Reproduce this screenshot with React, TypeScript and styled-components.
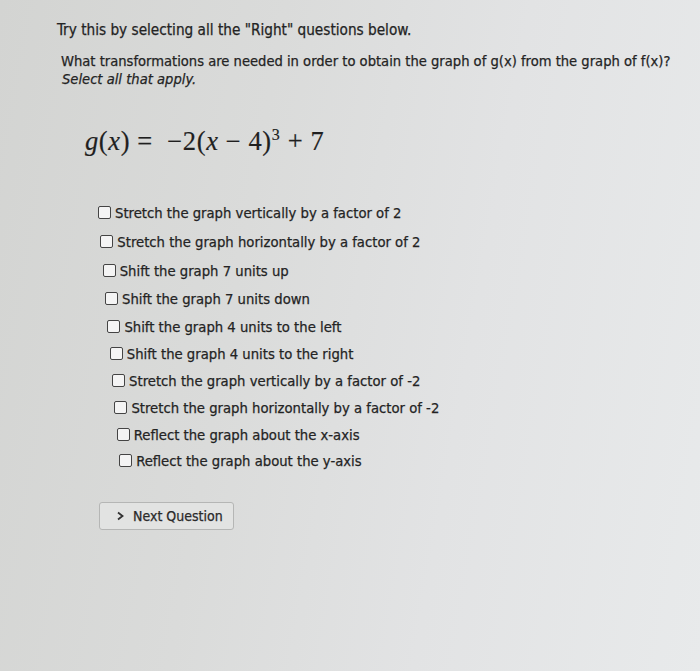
import React from "react";
import styled, { createGlobalStyle } from "styled-components";

const Global = createGlobalStyle`
  html, body { margin: 0; padding: 0; }
  body {
    width: 700px;
    height: 671px;
    overflow: hidden;
    background: linear-gradient(100deg, #d3d4d2 0%, #dadbda 35%, #e2e3e4 65%, #e8eaeb 100%);
    font-family: "DejaVu Sans Condensed", "DejaVu Sans", sans-serif;
    color: #222;
    -webkit-text-stroke: 0.25px #2a2a2a;
  }
`;

const Page = styled.div`
  display: flex;
  flex-direction: column;
  padding: 20px 0 0 57px;
`;

const Title = styled.div`
  font-size: 15.2px;
  line-height: 20px;
`;

const Question = styled.div`
  margin-top: 12px;
  margin-left: 4px;
  font-size: 14.6px;
  line-height: 18px;
`;

const Italic = styled.div`
  font-style: italic;
  margin-left: 1px;
`;

const Formula = styled.div`
  margin: 37px 0 0 28px;
  font-family: "Liberation Serif", "DejaVu Serif", serif;
  font-size: 26.5px;
  line-height: 32px;
  color: #1f1f1f;
  letter-spacing: 0.6px;
  -webkit-text-stroke: 0.2px #1f1f1f;
`;

const Var = styled.span`
  font-style: italic;
`;

const Sup = styled.sup`
  font-size: 16px;
  vertical-align: 10px;
  line-height: 0;
`;

const List = styled.div`
  display: flex;
  flex-direction: column;
  margin-top: 41px;
  margin-left: 41px;
`;

const Row = styled.label<{ $indent: number; $h: number }>`
  display: flex;
  align-items: center;
  gap: 4px;
  height: ${(p) => p.$h}px;
  margin-left: ${(p) => p.$indent}px;
  font-size: 14.7px;
  cursor: pointer;
`;

const Box = styled.span`
  width: 13px;
  height: 13px;
  box-sizing: border-box;
  border: 1.5px solid #444;
  border-radius: 2px;
  background: #f4f4f4;
  flex: none;
`;

const Button = styled.button`
  margin: 28px 0 0 42px;
  align-self: flex-start;
  display: flex;
  align-items: center;
  gap: 8px;
  width: 135px;
  height: 28px;
  padding: 0 0 0 16px;
  box-sizing: border-box;
  border: 1px solid #b5b6b5;
  border-radius: 3px;
  background: #e2e3e2;
  font-family: "DejaVu Sans Condensed", "DejaVu Sans", sans-serif;
  font-size: 14px;
  color: #2a2a2a;
  -webkit-text-stroke: 0.25px #2a2a2a;
`;

const options = [
  "Stretch the graph vertically by a factor of 2",
  "Stretch the graph horizontally by a factor of 2",
  "Shift the graph 7 units up",
  "Shift the graph 7 units down",
  "Shift the graph 4 units to the left",
  "Shift the graph 4 units to the right",
  "Stretch the graph vertically by a factor of -2",
  "Stretch the graph horizontally by a factor of -2",
  "Reflect the graph about the x-axis",
  "Reflect the graph about the y-axis",
];

const heights = [29, 29, 28.5, 28, 27.5, 27, 27, 27, 26.5, 26];

export default function App() {
  return (
    <>
      <Global />
      <Page>
        <Title>Try this by selecting all the "Right" questions below.</Title>
        <Question>
          What transformations are needed in order to obtain the graph of g(x) from the graph of f(x)?
          <Italic>Select all that apply.</Italic>
        </Question>
        <Formula>
          <Var>g</Var>(<Var>x</Var>) = &nbsp;−2(<Var>x</Var> − 4)<Sup>3</Sup> + 7
        </Formula>
        <List>
          {options.map((o, i) => (
            <Row key={o} $indent={i * 2.35} $h={heights[i]}>
              <Box />
              {o}
            </Row>
          ))}
        </List>
        <Button>
          <svg width="9" height="10" viewBox="0 0 9 10">
            <path d="M2 1.5 L6.5 5 L2 8.5" fill="none" stroke="#333" strokeWidth="1.8" />
          </svg>
          Next Question
        </Button>
      </Page>
    </>
  );
}
